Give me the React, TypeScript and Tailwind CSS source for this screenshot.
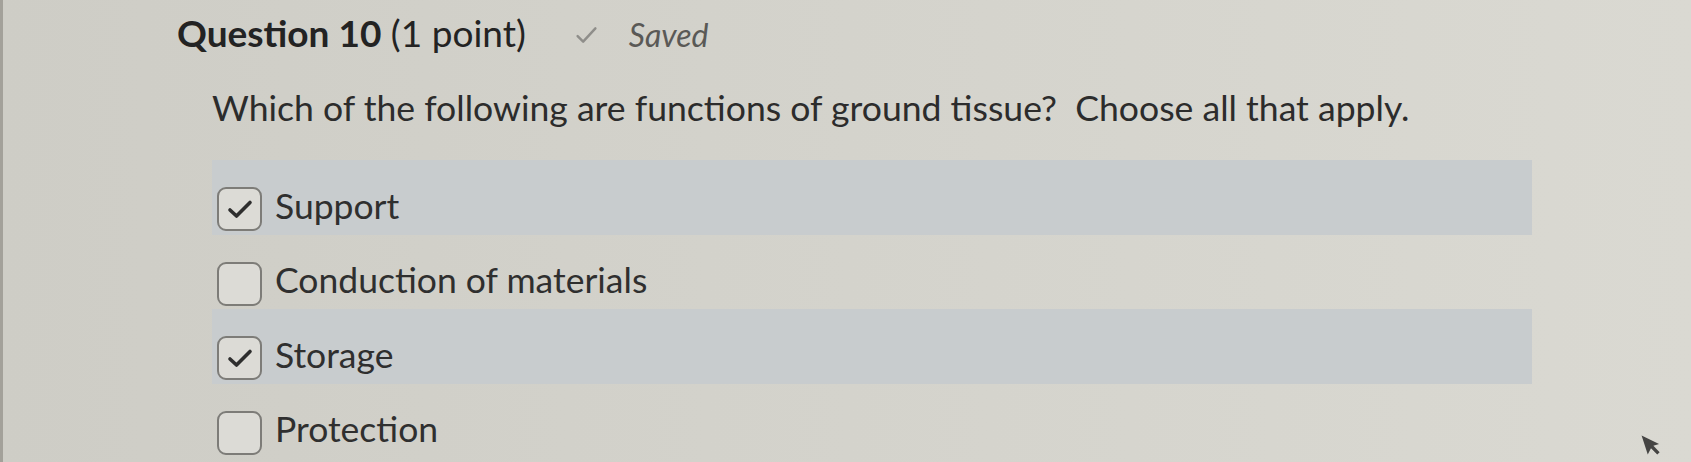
import React from 'react'

// ── Data ──────────────────────────────────────────────────────────────────────

type Choice = { label: string; checked: boolean }

const CHOICES: Choice[] = [
  { label: 'Support', checked: true },
  { label: 'Conduction of materials', checked: false },
  { label: 'Storage', checked: true },
  { label: 'Protection', checked: false },
]

// ── Checkbox ──────────────────────────────────────────────────────────────────

function Checkbox({ checked }: { checked: boolean }) {
  return (
    <span className="flex h-[44px] w-[45px] shrink-0 items-center justify-center rounded-[9px] border-2 border-[#7d7c78] bg-[#dcdbd6]">
      {checked && (
        <svg width="28" height="22" viewBox="0 0 28 22" fill="none">
          <path
            d="M4 12l6.5 6L24 4.5"
            stroke="#2e2e2e"
            strokeWidth="3.6"
            strokeLinecap="round"
            strokeLinejoin="round"
          />
        </svg>
      )}
    </span>
  )
}

// ── Choice row ────────────────────────────────────────────────────────────────

function ChoiceRow({ choice }: { choice: Choice }) {
  return (
    <label
      className={`flex h-[74.5px] items-center gap-[13px] pl-[5px] pt-[24px] ${
        choice.checked ? 'bg-[#c8ccce]' : ''
      }`}
    >
      <Checkbox checked={choice.checked} />
      <span className="mb-[7px] text-[35.5px] leading-[1.2] text-[#2f2f2f]">{choice.label}</span>
    </label>
  )
}

// ── Page ──────────────────────────────────────────────────────────────────────

export default function App() {
  return (
    <div
      className="relative h-[462px] w-[1691px] overflow-hidden border-l-[3px] border-[#a3a19a] bg-gradient-to-r from-[#cecdc6] via-[#d4d3cc] to-[#dad9d2]"
      style={{ fontFamily: 'Lato, "Open Sans", sans-serif' }}
    >
      <div className="pl-[174px] pt-[11px]">
        {/* header */}
        <div className="flex items-center">
          <h2 className="text-[37px] leading-[1.2] text-[#232323]">
            <span className="font-bold">Question 10</span> (1 point)
          </h2>
          <span className="ml-[49px] mt-[4px] flex items-center gap-[31px] text-[#5a5956]">
            <svg width="23" height="20" viewBox="0 0 20 18" fill="none">
              <path
                d="M2 10l5 5L18 3"
                stroke="#8f8e8a"
                strokeWidth="2.2"
                strokeLinecap="round"
                strokeLinejoin="round"
              />
            </svg>
            <span className="text-[32px] italic leading-[1.2]">Saved</span>
          </span>
        </div>

        {/* question */}
        <div className="ml-[35px] mt-[32px] w-[1320px]">
          <p className="text-[35.6px] leading-[1.2] text-[#2c2c2c]">
            Which of the following are functions of ground tissue?{'\u00a0 '}Choose all that apply.
          </p>

          <div className="mt-[30px] flex flex-col">
            {CHOICES.map((c) => (
              <ChoiceRow key={c.label} choice={c} />
            ))}
          </div>
        </div>
      </div>

      {/* mouse pointer */}
      <svg
        className="absolute left-[1640px] top-[432px] rotate-[-18deg]"
        width="16"
        height="26"
        viewBox="0 0 16 26"
      >
        <path d="M2 1v20l5-5 4 8 3-1.5-4-8h6z" fill="#2a2a2a" opacity="0.85" />
      </svg>
    </div>
  )
}
